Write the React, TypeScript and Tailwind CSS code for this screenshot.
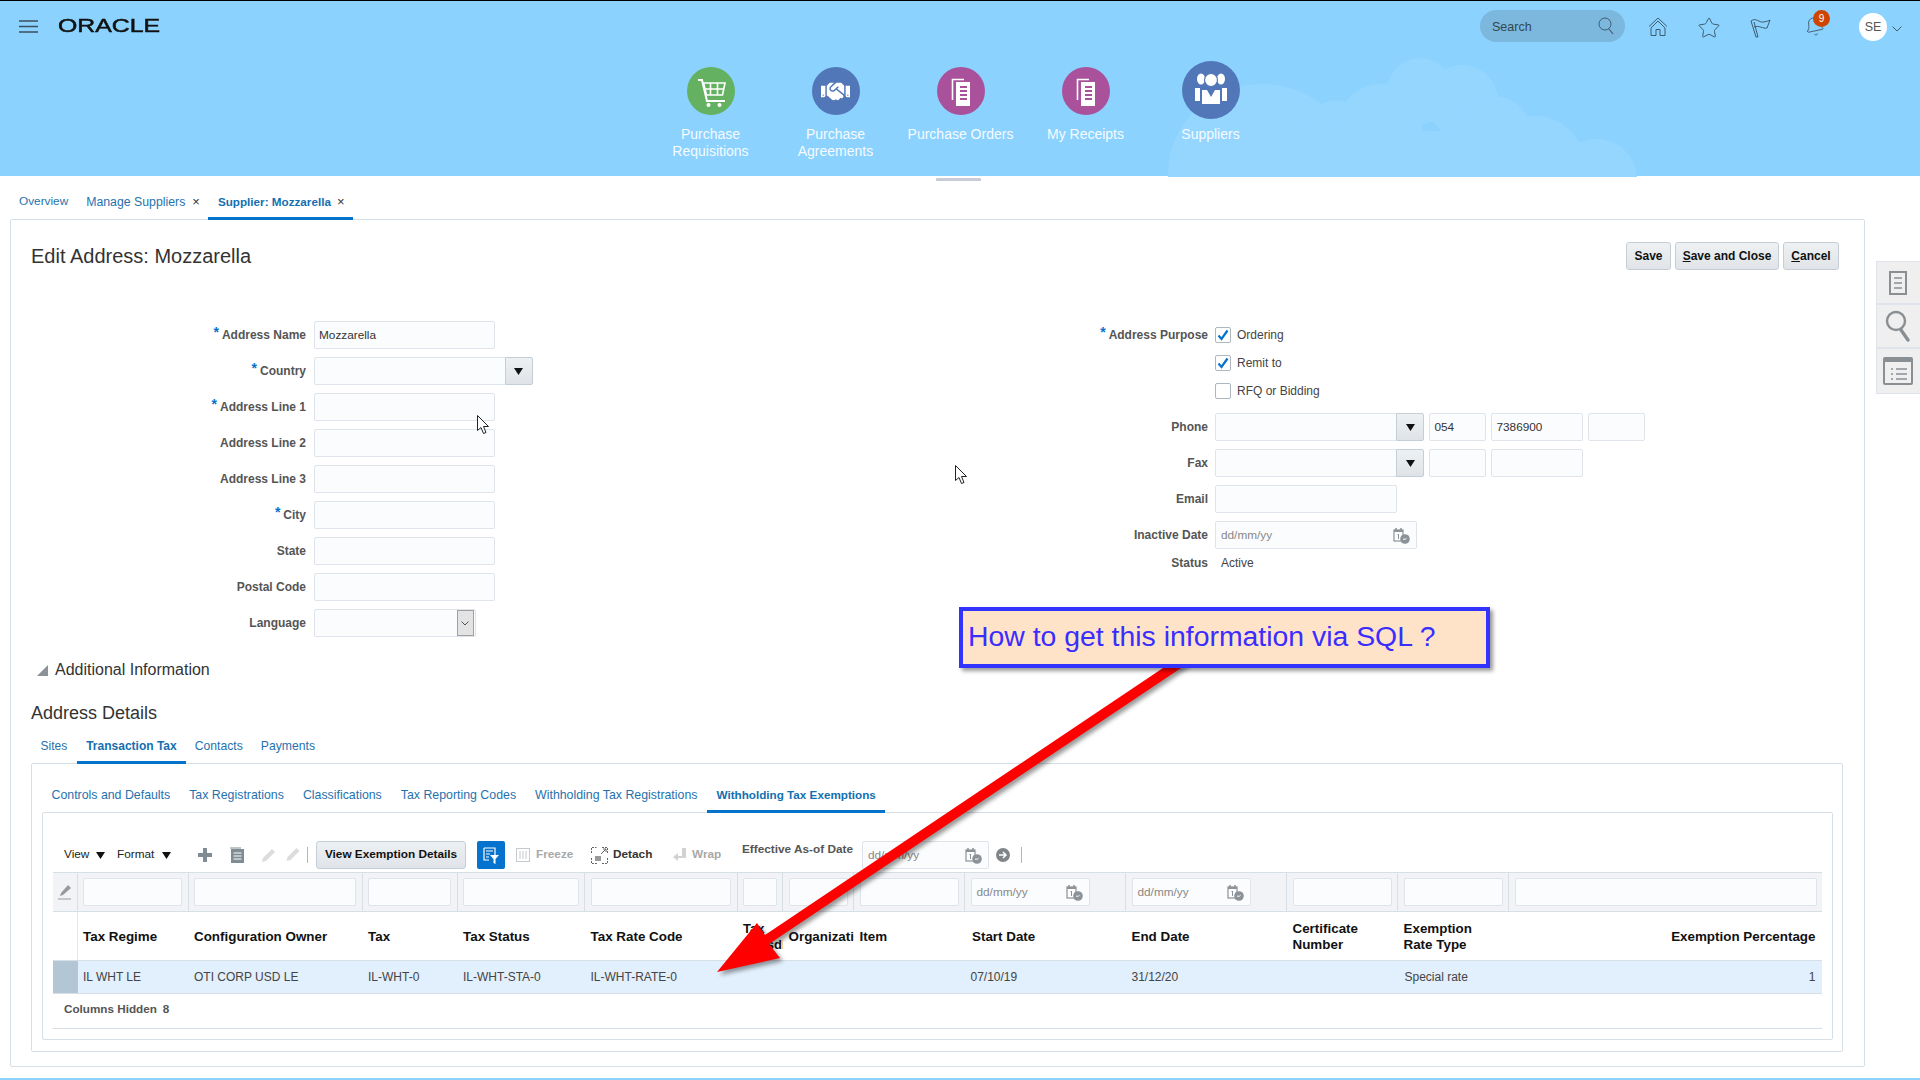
import React from "react";
import { FaHandshake } from "react-icons/fa";
import { Bell, Star } from "lucide-react";

const Caret = () => (
  <svg width="9" height="7" viewBox="0 0 9 7" className="shrink-0"><path d="M0 0h9L4.5 7z" fill="#111" /></svg>
);

const Cal = () => (
  <svg width="17" height="17" viewBox="0 0 17 17" className="shrink-0">
    <rect x="1" y="3" width="9" height="11" fill="#fff" stroke="#8b9298" strokeWidth="1.2" />
    <path d="M3 1v3M8 1v3" stroke="#8b9298" strokeWidth="1.5" />
    <path d="M1 3h9v2H1z" fill="#8b9298" />
    <path d="M4.5 8l1-1v5" stroke="#8b9298" strokeWidth="1" fill="none" />
    <circle cx="12" cy="12" r="4.8" fill="#8b9298" />
    <path d="M10 12.2h2.4l1.2-1" stroke="#fff" strokeWidth="1" fill="none" />
  </svg>
);

const Input = ({ w, text }: { w: string; text?: string }) => (
  <div className={`${w} h-[28px] shrink-0 border border-[#dfe4ea] bg-[#fbfcfd] rounded-[2px] flex items-center pl-[4.5px] pt-[1px] text-[11.8px] text-[#333]`}>{text}</div>
);

const SelectBtn = () => (
  <div className="w-[28px] h-[28px] -ml-px shrink-0 border border-[#c4ced7] rounded-r-[2px] bg-gradient-to-b from-[#eef1f3] to-[#dfe3e7] flex items-center justify-center"><Caret /></div>
);

const Req = () => <span className="text-[#0572ce] text-[14px] leading-[8px] relative -top-[3px] mr-[3px]">*</span>;

const Row = ({ label, req, children }: { label: string; req?: boolean; children: React.ReactNode }) => (
  <div className="flex h-[36px]">
    <div className="w-[295px] shrink-0 h-[28px] flex items-center justify-end text-[12px] font-bold text-[#555] whitespace-nowrap">
      {req && <Req />}
      {label}
    </div>
    <div className="ml-[7.5px] flex">{children}</div>
  </div>
);

const RightLabel = ({ req, children }: { req?: boolean; children: React.ReactNode }) => (
  <div className="w-[211px] shrink-0 h-[28px] flex items-center justify-end text-[12px] font-bold text-[#555]">
    {req && <Req />}
    {children}
  </div>
);

const DateInput = ({ w }: { w: string }) => (
  <div className={`${w} h-[28px] shrink-0 border border-[#dfe4ea] bg-[#fbfcfd] rounded-[2px] flex items-center justify-between pl-[5px] pr-[6px] pt-[1px] text-[11.8px] text-[#888]`}>
    <span>dd/mm/yy</span>
    <Cal />
  </div>
);

const Check = ({ on, label }: { on?: boolean; label: string }) => (
  <div className="h-[28px] flex items-center gap-[6px] text-[12px] text-[#444]">
    <div className="w-[16px] h-[16px] border border-[#aeb7bf] bg-white rounded-[2px] flex items-center justify-center">
      {on && (
        <svg width="12" height="12" viewBox="0 0 12 12"><path d="M1.5 6.500l3 3.500 6-8.500" stroke="#0572ce" strokeWidth="2.2" fill="none" /></svg>
      )}
    </div>
    {label}
  </div>
);

const Doc = () => (
  <svg width="48" height="48" viewBox="0 0 48 48">
    <path d="M15.500 33V12.500H27" stroke="#fff" strokeWidth="1.6" fill="none" />
    <rect x="19" y="15" width="14" height="24" fill="#fff" />
    <path d="M23 20h7M23 24h7M23 28h7M23 32h7" stroke="#a9529b" strokeWidth="1.8" />
  </svg>
);

const Cart = () => (
  <svg width="48" height="48" viewBox="0 0 48 48">
    <path d="M11 13h4l5 21h18" stroke="#fff" strokeWidth="2" fill="none" />
    <path d="M16.500 16H38l-2.500 12H19.500zM23.500 16v12M30.500 16v12M18 22h19" stroke="#fff" strokeWidth="1.6" fill="none" />
    <circle cx="21.500" cy="38" r="2" fill="#fff" />
    <circle cx="32.500" cy="38" r="2" fill="#fff" />
  </svg>
);

const People = () => (
  <svg width="58" height="58" viewBox="0 0 58 58">
    <ellipse cx="19" cy="18" rx="4" ry="5.500" fill="#fff" />
    <ellipse cx="39" cy="18" rx="4" ry="5.500" fill="#fff" />
    <circle cx="29" cy="19" r="6.500" fill="#fff" stroke="#5277b8" strokeWidth="1.2" />
    <path d="M13 27h5v13h-5zM40 27h5v13h-5z" fill="#fff" />
    <path d="M20 29h5l4 7 4-7h5v14H20z" fill="#fff" />
  </svg>
);

const NavItem = ({ big, bg, icon, children }: { big?: boolean; bg: string; icon: React.ReactNode; children: React.ReactNode }) => (
  <div className="w-[125px] flex flex-col items-center">
    <div className="h-[58px] flex items-center justify-center">
      <div className={`${big ? "w-[58px] h-[58px]" : "w-[48px] h-[48px] mt-[2px]"} ${bg} rounded-full flex items-center justify-center`}>{icon}</div>
    </div>
    <div className="mt-[7px] text-[14px] leading-[17px] text-[#f6fbff] text-center">{children}</div>
  </div>
);

const Tab = ({ active, size, children }: { active?: boolean; size: string; children: React.ReactNode }) => (
  <div className={`relative z-10 flex items-center pt-[6px] px-[9.5px] border-b-[3px] whitespace-nowrap ${size} ${active ? "border-[#0572ce] font-bold text-[#146fb0]" : "border-transparent text-[#1f72ae]"}`}>{children}</div>
);

const Cell = ({ children }: { children?: React.ReactNode }) => (
  <div className="px-[5.5px] flex items-center overflow-hidden">{children}</div>
);

const gridCols = "grid grid-cols-[24.5px_111px_174px_95px_127.5px_152.5px_45.5px_71px_111px_161px_161px_111px_111px_313px]";

const HeadCell = ({ children, right }: { children: React.ReactNode; right?: boolean }) => (
  <div className={`pl-[5.5px] pr-[6.5px] pt-[1px] flex items-center overflow-hidden text-[13.4px] leading-[16px] font-bold text-[#111] ${right ? "justify-end text-right" : ""}`}>
    <span>{children}</span>
  </div>
);

const DataCell = ({ children, right }: { children?: React.ReactNode; right?: boolean }) => (
  <div className={`pl-[5.5px] pr-[6.5px] flex items-center text-[12px] text-[#444] whitespace-nowrap ${right ? "justify-end" : ""}`}>{children}</div>
);

export default function App() {
  return (
    <div className="relative w-[1920px] h-[1080px] overflow-hidden bg-white flex flex-col font-['Liberation_Sans',Arial,sans-serif]">
      {/* Header */}
      <div className="relative h-[176px] shrink-0 bg-[#8bd2ff] border-t border-black">
        <svg className="absolute left-0 top-0" width="1920" height="176" viewBox="0 0 1920 176">
          <g fill="#95d6ff">
            <ellipse cx="1262" cy="172" rx="94" ry="89" />
            <circle cx="1336" cy="125" r="26" />
            <circle cx="1380" cy="125" r="42" />
            <circle cx="1420" cy="90" r="33" />
            <circle cx="1462" cy="100" r="36" />
            <circle cx="1495" cy="130" r="35" />
            <circle cx="1535" cy="165" r="50" />
            <circle cx="1597" cy="178" r="40" />
            <rect x="1262" y="130" width="300" height="46" />
          </g>
        </svg>
        <div className="relative h-[60px] flex items-start pl-[19px]">
          <svg width="20" height="13" viewBox="0 0 20 13" className="mt-[19px] shrink-0">
            <path d="M0 1h19M0 6.500h19M0 12h19" stroke="#3c4f5c" strokeWidth="1.6" />
          </svg>
          <div className="ml-[19px] mt-[15px] w-[103px] h-[20px] flex items-start">
            <span className="inline-block origin-left scale-x-[1.38] text-[18px] leading-[20px] text-[#111] font-normal [-webkit-text-stroke:0.5px_#111] whitespace-nowrap">ORACLE</span>
          </div>
          <div className="ml-auto flex items-start">
            <div className="mt-[9px] w-[145px] h-[32px] bg-[#7cb8dd] rounded-[16px] flex items-center justify-between pl-[12px] pr-[10px] text-[12.5px] text-[#33474f]">
              <span className="pt-[2px]">Search</span>
              <svg width="17" height="18" viewBox="0 0 17 18"><circle cx="7" cy="7" r="6" fill="none" stroke="#3f5c70" strokeWidth="1" /><path d="M11 12l4 5" stroke="#3f5c70" strokeWidth="1.2" /></svg>
            </div>
            <svg width="20" height="19" viewBox="0 0 20 19" className="ml-[23px] mt-[16px]" fill="none" stroke="#3f5c70" strokeWidth="1">
              <path d="M1 9.500L10 1l9 8.500M3 11L10 4l7 7M3 11v7.500h5v-6h4v6h5V11" />
            </svg>
            <Star className="ml-[29px] mt-[15px]" size={24} strokeWidth={1} color="#3f5c70" />
            <svg width="21" height="22" viewBox="0 0 21 22" className="ml-[29px] mt-[15px]" fill="none" stroke="#3f5c70" strokeWidth="1">
              <path d="M1 5l5 16h2L4 6M1 5c5-4 8 2 13 1 3-1 5-1 6-2-1 3-2 5-3 8-4 1-8-3-13-1" />
            </svg>
            <div className="relative ml-[33px] mt-[15px] w-[20px] h-[22px]">
              <Bell className="-rotate-12" size={21} strokeWidth={1} color="#3f5c70" />
              <div className="absolute -right-[6px] -top-[6px] w-[17px] h-[17px] rounded-full bg-[#cf4500] text-white text-[10px] font-normal flex items-center justify-center">9</div>
            </div>
            <div className="ml-[35px] mt-[12px] w-[28px] h-[28px] rounded-full bg-white flex items-center justify-center text-[12.5px] text-[#555]">SE</div>
            <svg width="10" height="6" viewBox="0 0 10 6" className="ml-[5px] mr-[18px] mt-[25px]" fill="none" stroke="#3f5c70" strokeWidth="1"><path d="M.5.500L5 5 9.500.500" /></svg>
          </div>
        </div>
        <div className="relative flex justify-center ml-[1px]">
          <NavItem bg="bg-[#64b162]" icon={<Cart />}>Purchase<br />Requisitions</NavItem>
          <NavItem bg="bg-[#5277b8]" icon={<FaHandshake size={29} color="#fff" />}>Purchase<br />Agreements</NavItem>
          <NavItem bg="bg-[#a9529b]" icon={<Doc />}>Purchase Orders</NavItem>
          <NavItem bg="bg-[#a9529b]" icon={<Doc />}>My Receipts</NavItem>
          <NavItem big bg="bg-[#5277b8]" icon={<People />}>Suppliers</NavItem>
        </div>
      </div>

      {/* Splitter handle */}
      <div className="mt-[2px] h-[3px] w-[45px] ml-[936px] bg-[#c8ccd8] rounded-t-[1px] shrink-0" />

      {/* Page tabs */}
      <div className="flex h-[39px] pl-[9.5px] shrink-0">
        <Tab size="text-[11.8px] -mr-[1px]">Overview</Tab>
        <Tab size="text-[12.3px]">Manage Suppliers<span className="ml-[7px] -mr-[1px] text-[#333] text-[13px]">×</span></Tab>
        <Tab active size="text-[11.7px]">Supplier: Mozzarella<span className="ml-[6px] -mr-[1px] text-[#333] font-normal text-[13px]">×</span></Tab>
      </div>

      {/* Body */}
      <div className="flex -mt-px">
        <div className="ml-[10px] w-[1855px] h-[848px] border border-[#d6dfe6] rounded-[2px] shrink-0">
          <div className="mt-[22px] h-[28px] pl-[20px] pr-[25px] flex items-center justify-between">
            <div className="text-[20px] text-[#333]">Edit Address: Mozzarella</div>
            <div className="flex gap-[4px] text-[12px] font-bold text-[#111]">
              <div className="w-[45px] h-[28px] flex items-center justify-center border border-[#c4ced7] rounded-[3px] bg-gradient-to-b from-[#eef1f3] to-[#e0e4e8]">Save</div>
              <div className="w-[104px] h-[28px] flex items-center justify-center border border-[#c4ced7] rounded-[3px] bg-gradient-to-b from-[#eef1f3] to-[#e0e4e8]"><span><u>S</u>ave and Close</span></div>
              <div className="w-[56px] h-[28px] flex items-center justify-center border border-[#c4ced7] rounded-[3px] bg-gradient-to-b from-[#eef1f3] to-[#e0e4e8]"><span><u>C</u>ancel</span></div>
            </div>
          </div>

          {/* Form */}
          <div className="mt-[51px] h-[324px] flex">
            <div className="w-[986px] shrink-0">
              <Row label="Address Name" req><Input w="w-[181px]" text="Mozzarella" /></Row>
              <Row label="Country" req><Input w="w-[192px]" /><SelectBtn /></Row>
              <Row label="Address Line 1" req><Input w="w-[181px]" /></Row>
              <Row label="Address Line 2"><Input w="w-[181px]" /></Row>
              <Row label="Address Line 3"><Input w="w-[181px]" /></Row>
              <Row label="City" req><Input w="w-[181px]" /></Row>
              <Row label="State"><Input w="w-[181px]" /></Row>
              <Row label="Postal Code"><Input w="w-[181px]" /></Row>
              <Row label="Language">
                <div className="flex w-[162px] h-[28px] border border-[#dfe4ea] bg-[#fbfcfd] rounded-[2px] justify-end items-center pr-[1px]">
                  <div className="w-[17px] h-[26px] bg-[#e3e3e3] border border-[#a0a0a0] flex items-center justify-center">
                    <svg width="8" height="5" viewBox="0 0 8 5" fill="none" stroke="#555" strokeWidth="1"><path d="M.5.500L4 4 7.500.500" /></svg>
                  </div>
                </div>
              </Row>
            </div>
            <div className="w-[637px] shrink-0">
              <div className="flex h-[92px]">
                <RightLabel req>Address Purpose</RightLabel>
                <div className="ml-[7px]">
                  <Check on label="Ordering" />
                  <Check on label="Remit to" />
                  <Check label="RFQ or Bidding" />
                </div>
              </div>
              <div className="flex h-[36px]">
                <RightLabel>Phone</RightLabel>
                <div className="ml-[7px] flex">
                  <Input w="w-[182px]" /><SelectBtn />
                  <div className="ml-[5px]"><Input w="w-[57px]" text="054" /></div>
                  <div className="ml-[5px]"><Input w="w-[92px]" text="7386900" /></div>
                  <div className="ml-[5px]"><Input w="w-[57px]" /></div>
                </div>
              </div>
              <div className="flex h-[36px]">
                <RightLabel>Fax</RightLabel>
                <div className="ml-[7px] flex">
                  <Input w="w-[182px]" /><SelectBtn />
                  <div className="ml-[5px]"><Input w="w-[57px]" /></div>
                  <div className="ml-[5px]"><Input w="w-[92px]" /></div>
                </div>
              </div>
              <div className="flex h-[36px]">
                <RightLabel>Email</RightLabel>
                <div className="ml-[7px]"><Input w="w-[182px]" /></div>
              </div>
              <div className="flex h-[28px]">
                <RightLabel>Inactive Date</RightLabel>
                <div className="ml-[7px]"><DateInput w="w-[202px]" /></div>
              </div>
              <div className="flex h-[28px]">
                <RightLabel>Status</RightLabel>
                <div className="ml-[13px] h-[28px] flex items-center text-[12px] text-[#444]">Active</div>
              </div>
            </div>
          </div>

          {/* Additional Information */}
          <div className="mt-[13px] ml-[26px] h-[24px] flex items-center gap-[7px] text-[16px] text-[#333]">
            <svg width="11" height="11" viewBox="0 0 11 11"><path d="M11 0v11H0z" fill="#8c9298" /></svg>
            Additional Information
          </div>
          <div className="mt-[19px] ml-[20px] h-[24px] flex items-center text-[18px] text-[#333]">Address Details</div>

          {/* Address tabs */}
          <div className="flex h-[39px] pl-[20px]">
            <Tab size="text-[12px]">Sites</Tab>
            <Tab active size="text-[12px]">Transaction Tax</Tab>
            <Tab size="text-[12.2px] -ml-[1px]">Contacts</Tab>
            <Tab size="text-[12.2px] -ml-[1px]">Payments</Tab>
          </div>

          {/* Tax panel */}
          <div className="-mt-px ml-[20px] w-[1812px] h-[289px] border border-[#d6dfe6] rounded-[2px]">
            <div className="flex h-[49px] pl-[10px]">
              {["Controls and Defaults", "Tax Registrations", "Classifications", "Tax Reporting Codes", "Withholding Tax Registrations"].map((t) => (
                <div key={t} className="relative z-10 flex items-center pt-[16px] px-[9.5px] border-b-[3px] border-transparent whitespace-nowrap text-[12.35px] text-[#1f72ae]">{t}</div>
              ))}
              <div className="relative z-10 flex items-center pt-[16px] px-[9.5px] border-b-[3px] border-[#0572ce] whitespace-nowrap text-[11.7px] font-bold text-[#146fb0]">Withholding Tax Exemptions</div>
            </div>
            <div className="-mt-px ml-[10px] w-[1791px] h-[228px] border border-[#d6dfe6] rounded-[2px]">
              {/* Toolbar */}
              <div className="mt-[28px] h-[28px] pl-[21px] flex items-center text-[11.8px] text-[#222] whitespace-nowrap">
                <span className="w-[26px]">View</span>
                <span className="ml-[6px]"><Caret /></span>
                <span className="ml-[12px] w-[39px]">Format</span>
                <span className="ml-[6px]"><Caret /></span>
                <svg width="14" height="14" viewBox="0 0 14 14" className="ml-[27px] shrink-0"><path d="M5 0h4v5h5v4H9v5H5V9H0V5h5z" fill="#7f8c94" /></svg>
                <svg width="15" height="16" viewBox="0 0 15 16" className="ml-[18px] shrink-0"><path d="M0 1h11" stroke="#7f8c94" /><rect x="1" y="2" width="13" height="14" fill="#7f8c94" /><path d="M3.500 6h8M3.500 9h8M3.500 12h8" stroke="#fff" /></svg>
                <svg width="16" height="16" viewBox="0 0 16 16" className="ml-[16px] shrink-0"><path d="M1 15l1-4L11 2l3 3-9 9z" fill="#dcdcdc" /></svg>
                <svg width="17" height="16" viewBox="0 0 16 16" className="ml-[8px] shrink-0"><path d="M1 14l1-4L11 1l3 3-9 9z" fill="#dcdcdc" /></svg>
                <span className="ml-[5px] w-px h-[16px] bg-[#b9b9a8]" />
                <button className="ml-[8px] w-[150px] h-[28px] shrink-0 border border-[#c4ced7] rounded-[3px] bg-gradient-to-b from-[#eef1f3] to-[#e0e4e8] font-bold text-[#111] text-[11.8px]">View Exemption Details</button>
                <div className="ml-[11px] w-[28px] h-[28px] shrink-0 rounded-[2px] bg-[#0572ce] flex items-center justify-center">
                  <svg width="17" height="17" viewBox="0 0 17 17" fill="none" stroke="#fff" strokeWidth="1.2"><path d="M1 1h11v9M1 1v12h5M3 4h7M3 7h4M3 10h3" /><path d="M7 8h9l-3.500 4v5l-2-1v-4z" fill="#fff" stroke="none" /></svg>
                </div>
                <svg width="14" height="14" viewBox="0 0 14 14" className="ml-[11px] shrink-0" fill="none" stroke="#c5cacd"><rect x=".5" y=".5" width="13" height="13" /><path d="M4 3v8M7 3v8M10 3v8" /></svg>
                <span className="ml-[6px] w-[38px] font-bold text-[#a8a8a8]">Freeze</span>
                <svg width="17" height="17" viewBox="0 0 17 17" className="ml-[17px] shrink-0" fill="none" stroke="#666"><path d="M.5 6V.5h5M11 .5h5.500V6M16.500 11v5.500H11M6 16.500H.5V11" strokeDasharray="2 1" /><path d="M10 7l5-5M12 2h3v3" /><rect x="4" y="9" width="6" height="5" fill="#999" stroke="none" /></svg>
                <span className="ml-[5px] w-[39px] font-bold text-[#333]">Detach</span>
                <svg width="13" height="14" viewBox="0 0 13 14" className="ml-[21px] shrink-0"><path d="M9 0h4v10H5v3L0 9l5-4v3h4z" fill="#d2d2d2" /></svg>
                <span className="ml-[6px] w-[31px] font-bold text-[#a8a8a8]">Wrap</span>
                <span className="ml-[19px] w-[111px] self-start font-bold text-[#555]">Effective As-of Date</span>
                <div className="ml-[9px]"><DateInput w="w-[127px]" /></div>
                <svg width="14" height="14" viewBox="0 0 14 14" className="ml-[7px] shrink-0"><circle cx="7" cy="7" r="7" fill="#7f8589" /><path d="M3 7h7M7 4l3 3-3 3" stroke="#fff" strokeWidth="1.500" fill="none" /></svg>
                <span className="ml-[11px] w-px h-[16px] bg-[#b9b9a8]" />
              </div>

              {/* Table */}
              <div className="mt-[3px] ml-[10px] w-[1769px]">
                <div className={`${gridCols} h-[40px] bg-[#f1f3f6] border-y border-[#d6dfe6] divide-x divide-[#d6dfe6]`}>
                  <div className="flex items-center justify-center">
                    <svg width="14" height="16" viewBox="0 0 14 16"><path d="M3 9l7-8 3 3-8 7-3 1z" fill="#999" /><path d="M0 15h13" stroke="#999" /></svg>
                  </div>
                  <Cell><Input w="w-full" /></Cell>
                  <Cell><Input w="w-full" /></Cell>
                  <Cell><Input w="w-full" /></Cell>
                  <Cell><Input w="w-full" /></Cell>
                  <Cell><Input w="w-full" /></Cell>
                  <Cell><Input w="w-full" /></Cell>
                  <Cell><Input w="w-full" /></Cell>
                  <Cell><Input w="w-full" /></Cell>
                  <Cell><DateInput w="w-[119px]" /></Cell>
                  <Cell><DateInput w="w-[119px]" /></Cell>
                  <Cell><Input w="w-full" /></Cell>
                  <Cell><Input w="w-full" /></Cell>
                  <Cell><Input w="w-full" /></Cell>
                </div>
                <div className={`${gridCols} h-[48px]`}>
                  <div className="border-r border-[#e4e8ec]" />
                  <HeadCell>Tax Regime</HeadCell>
                  <HeadCell>Configuration Owner</HeadCell>
                  <HeadCell>Tax</HeadCell>
                  <HeadCell>Tax Status</HeadCell>
                  <HeadCell>Tax Rate Code</HeadCell>
                  <div className="pl-[5.5px] pt-[1px] flex items-center overflow-hidden text-[13px] leading-[16px] font-bold text-[#111] whitespace-nowrap"><span>Tax<br />Jurisdi</span></div>
                  <div className="pl-[5.5px] pt-[1px] flex items-center overflow-hidden text-[13.4px] leading-[16px] font-bold text-[#111] whitespace-nowrap">Organizati</div>
                  <HeadCell>Item</HeadCell>
                  <div className="pl-[7px] pt-[1px] flex items-center text-[13.4px] leading-[16px] font-bold text-[#111]">Start Date</div>
                  <HeadCell>End Date</HeadCell>
                  <HeadCell>Certificate<br />Number</HeadCell>
                  <HeadCell>Exemption<br />Rate Type</HeadCell>
                  <HeadCell right>Exemption Percentage</HeadCell>
                </div>
                <div className={`${gridCols} h-[34px] bg-[#e2effc] border-y border-[#d6dfe6]`}>
                  <div className="bg-[#b2c6d6]" />
                  <DataCell>IL WHT LE</DataCell>
                  <DataCell>OTI CORP USD LE</DataCell>
                  <DataCell>IL-WHT-0</DataCell>
                  <DataCell>IL-WHT-STA-0</DataCell>
                  <DataCell>IL-WHT-RATE-0</DataCell>
                  <DataCell />
                  <DataCell />
                  <DataCell />
                  <DataCell>07/10/19</DataCell>
                  <DataCell>31/12/20</DataCell>
                  <DataCell />
                  <DataCell><span className="ml-[1px]">Special rate</span></DataCell>
                  <DataCell right>1</DataCell>
                </div>
                <div className="h-[35px] border-b border-[#d6dfe6] pl-[11px] pb-[5px] flex items-center text-[11.7px] font-bold text-[#555]">Columns Hidden<span className="ml-[6px]">8</span></div>
              </div>
            </div>
          </div>
        </div>

        {/* Right rail */}
        <div className="ml-[11px] mt-[42px] w-[44px] h-[133px] shrink-0 bg-[#efefef] border-l border-y border-[#dfe4ea] flex flex-col">
          <div className="h-[43px] pr-[2px] border-b-2 border-[#dfe4ea] flex items-center justify-center">
            <svg width="18" height="24" viewBox="0 0 18 24" fill="none" stroke="#8a8f94" strokeWidth="2"><rect x="1" y="1" width="16" height="22" /><path d="M5 7h8M5 12h8M5 17h8" strokeWidth="1.6" /></svg>
          </div>
          <div className="h-[44px] pr-[2px] border-b-2 border-[#dfe4ea] flex items-center justify-center">
            <svg width="26" height="32" viewBox="0 0 26 32" fill="none" stroke="#8a8f94"><circle cx="11" cy="11" r="9" strokeWidth="2.4" /><path d="M16 20l7 10" strokeWidth="3.4" strokeLinecap="round" /></svg>
          </div>
          <div className="flex-1 pr-[2px] flex items-center justify-center">
            <svg width="30" height="28" viewBox="0 0 30 28" fill="none" stroke="#8a8f94" strokeWidth="2"><rect x="1" y="1" width="28" height="26" rx="1" /><path d="M1 3h28" strokeWidth="4" /><path d="M8 12h2M13 12h11M8 17h2M13 17h11M8 22h2M13 22h11" strokeWidth="1.5" /></svg>
          </div>
        </div>
      </div>

      <div className="mt-[11px] h-[2px] bg-[#8bd2ff]" />

      {/* Annotation arrow */}
      <svg className="absolute left-0 top-0 pointer-events-none drop-shadow-[3px_3px_2px_rgba(0,0,0,0.4)]" width="1920" height="1080" viewBox="0 0 1920 1080">
        <path d="M1170.500 663L765 935 757 923 717 972 780 958 769 944 1188.500 663z" fill="#ff0000" />
      </svg>

      {/* Callout */}
      <div className="absolute left-[959px] top-[607px] w-[531px] h-[61px] border-[4px] border-[#3333ff] bg-[#ffe3c8] shadow-[3px_3px_4px_rgba(0,0,0,0.4)] flex items-center pl-[5px] pb-[2px] text-[28.4px] text-[#3a2dff] whitespace-nowrap">How to get this information via SQL ?</div>

      {/* Mouse pointers */}
      <svg className="absolute left-[477px] top-[415px]" width="13" height="20" viewBox="0 0 13 20"><path d="M.5.5v15l3.500-3 2.500 6 2.500-1-2.500-6h5z" fill="#fff" stroke="#222" strokeWidth="1" /></svg>
      <svg className="absolute left-[955px] top-[465px]" width="13" height="20" viewBox="0 0 13 20"><path d="M.5.5v15l3.500-3 2.500 6 2.500-1-2.500-6h5z" fill="#fff" stroke="#222" strokeWidth="1" /></svg>
    </div>
  );
}
